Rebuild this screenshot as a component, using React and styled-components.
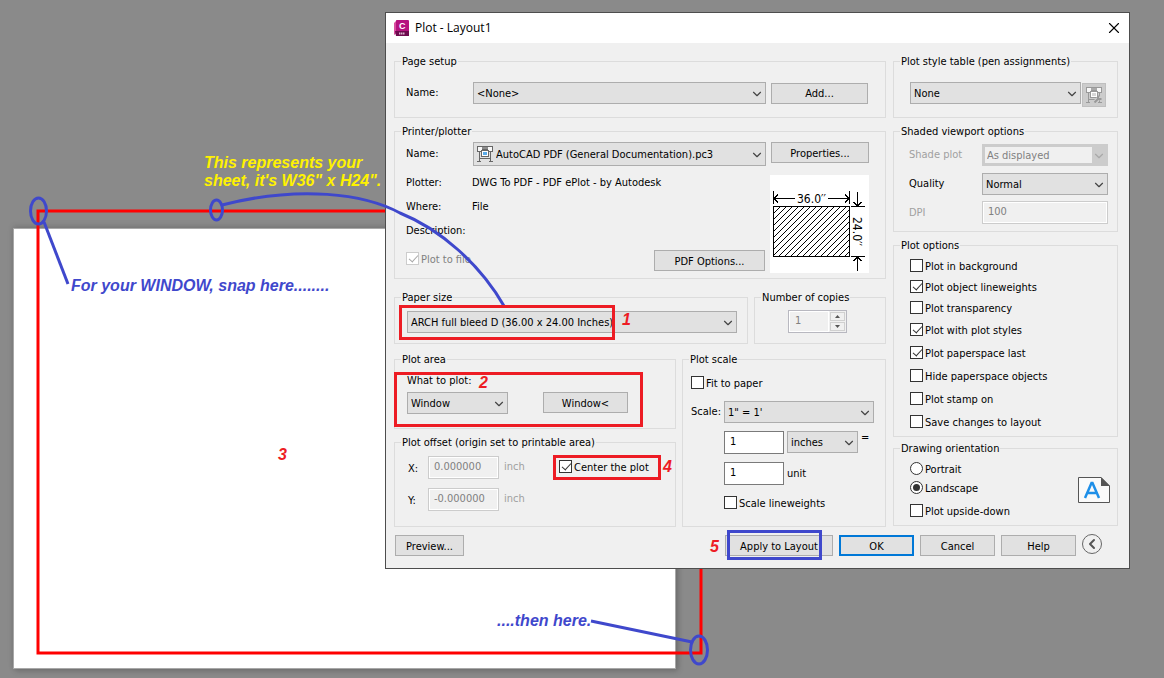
import React from "react";
import styled, { createGlobalStyle } from "styled-components";
import { ChevronDown, ChevronLeft, X } from "lucide-react";

const GlobalStyle = createGlobalStyle`
    * {
        box-sizing: border-box;
    }
    body {
        margin: 0;
        background: #8a8a8a;
        font-family: "DejaVu Sans Condensed", "DejaVu Sans", sans-serif;
        font-size: 11px;
        line-height: 14px;
        color: #000;
    }
    input, select, button {
        font: inherit;
        color: inherit;
        margin: 0;
    }
`

const Desktop = styled.main`
    position: relative;
    min-height: 100vh;
    overflow: hidden;
`
const Sheet = styled.div`
    position: absolute;
    left: 13px;
    top: 228px;
    width: 663px;
    height: 441px;
    background: #fff;
    border: 1px solid #a8a8a8;
    box-shadow: 2px 2px 6px rgba(0, 0, 0, 0.2), 0 -2px 6px rgba(0, 0, 0, 0.1);
`
const Overlay = styled.svg`
    position: absolute;
    left: 0;
    top: 0;
    pointer-events: none;
`
const Note = styled.div`
    position: absolute;
    left: ${p => p.$x}px;
    top: ${p => p.$y}px;
    color: ${p => p.$color};
    font: italic bold 16px/18px "Liberation Sans", Arial, sans-serif;
    white-space: nowrap;
`
const Mark = styled.div`
    position: absolute;
    left: ${p => p.$x}px;
    top: ${p => p.$y}px;
    width: ${p => p.$w}px;
    height: ${p => p.$h}px;
    border: 3px solid ${p => p.$color};
    pointer-events: none;
`

const Dialog = styled.section`
    position: absolute;
    left: 385px;
    top: 12px;
    width: 745px;
    background: #f0f0f0;
    border: 1px solid #4d4d4d;
`
const TitleBar = styled.header`
    display: flex;
    align-items: center;
    gap: 5px;
    height: 30px;
    padding: 0 6px 0 8px;
    background: #fff;
`
const Title = styled.h1`
    flex: 1;
    margin: 0;
    font: 12px/16px "Open Sans", sans-serif;
`
const CloseButton = styled.button`
    display: flex;
    padding: 0;
    border: 0;
    background: none;
`
const Columns = styled.div`
    display: flex;
    gap: 7px;
    padding: 11px 11px 0 8px;
`
const Main = styled.div`
    flex: 1;
    display: flex;
    flex-direction: column;
    gap: 6px;
`
const Side = styled.div`
    flex: none;
    width: 225px;
    display: flex;
    flex-direction: column;
    gap: 6px;
`
const Split = styled.div`
    display: flex;
    gap: 6px;
    padding-top: ${p => p.$top || 0}px;
`
const Stack = styled.div`
    flex: 1;
    display: flex;
    flex-direction: column;
    gap: ${p => p.$gap}px;
`

const Group = styled.fieldset`
    flex: ${p => (p.$w ? `none` : p.$grow ? `1` : `initial`)};
    width: ${p => (p.$w ? `${p.$w}px` : `auto`)};
    min-width: 0;
    margin: 0;
    padding: ${p => p.$pad};
    border: 1px solid #dcdcdc;
`
const Legend = styled.legend`
    margin-left: ${p => p.$shift || 0}px;
    padding: 0 1px;
    height: 14px;
    line-height: 16px;
    white-space: nowrap;
`
const Row = styled.div`
    display: flex;
    align-items: ${p => p.$align || "center"};
    gap: ${p => p.$gap || 0}px;
    margin-top: ${p => p.$top || 0}px;
`
const Caption = styled.label`
    flex: none;
    width: ${p => (p.$w ? `${p.$w}px` : "auto")};
    color: ${p => (p.$dim ? "#a0a0a0" : "inherit")};
    white-space: nowrap;
`
const Value = styled.span`
    white-space: nowrap;
`
const Button = styled.button`
    flex: none;
    width: ${p => p.$w}px;
    height: 21px;
    padding: 2px 0 0;
    background: #e1e1e1;
    border: ${p => (p.$primary ? "2px solid #0078d7" : "1px solid #adadad")};
    white-space: nowrap;
`

const SelectBox = styled.div`
    position: relative;
    flex: ${p => (p.$w ? "none" : "1")};
    width: ${p => (p.$w ? `${p.$w}px` : "auto")};
    color: ${p => (p.$dim ? "#808080" : "inherit")};

    > svg {
        position: absolute;
        top: 50%;
        margin-top: -6px;
        pointer-events: none;
    }
    > svg.arrow {
        right: 2px;
        color: ${p => (p.$dim ? "#a8a8a8" : "#444")};
    }
    > svg.icon {
        left: 4px;
        margin-top: -8px;
    }
    select {
        appearance: none;
        display: block;
        width: 100%;
        height: ${p => p.$h || 22}px;
        padding: 2px 16px 0 ${p => p.$indent || 3}px;
        background: ${p => (p.$dim ? "#f0f0f0" : "#e1e1e1")};
        border: 1px solid #adadad;
        border-radius: 0;
        opacity: 1;
        ${p => p.$dim && `
            border: 3px solid #cccccc;
            border-right-width: 16px;
            padding: 1px 0 0 2px;
        `}
    }
`
const TextBox = styled.input`
    flex: ${p => (p.$w ? "none" : "1")};
    width: ${p => (p.$w ? `${p.$w}px` : "auto")};
    min-width: 0;
    height: 23px;
    padding: 0 5px 2px;
    background: #fff;
    border: 1px solid #7a7a7a;

    &:disabled {
        color: #808080;
        background: #f0f0f0;
        border-color: #cccccc;
        box-shadow: inset 0 0 0 1px #fff;
    }
`
const CheckLabel = styled.label`
    display: flex;
    align-items: center;
    gap: 2px;
    color: ${p => (p.$dim ? "#808080" : "inherit")};
    white-space: nowrap;
    height: 13px;
`
const CheckText = styled.span`
    padding-top: 2px;
`
const Tick = styled.input`
    appearance: none;
    position: relative;
    flex: none;
    width: 13px;
    height: 13px;
    background: #fff;
    border: 1px solid #333;
    border-radius: ${p => (p.type === "radio" ? "50%" : "0")};

    &:disabled {
        border-color: #cccccc;
    }
    &[type="checkbox"]:checked::after {
        content: "";
        position: absolute;
        left: 4px;
        top: 0;
        width: 4px;
        height: 8px;
        border: solid #333;
        border-width: 0 1px 1px 0;
        transform: rotate(42deg);
    }
    &[type="checkbox"]:disabled::after {
        border-color: #a8a8a8;
    }
    &[type="radio"]:checked::after {
        content: "";
        position: absolute;
        left: 2px;
        top: 2px;
        width: 7px;
        height: 7px;
        border-radius: 50%;
        background: #333;
    }
`
const Checks = styled.div`
    display: flex;
    flex-direction: column;
    gap: ${p => p.$gap}px;
    margin-top: ${p => p.$top || 0}px;
`
const Details = styled.div`
    flex: 1;
    margin-top: 5px;
`
const Fact = styled.div`
    display: flex;
    align-items: center;
    height: 24px;
`
const Preview = styled.svg`
    flex: none;
    margin-top: 9px;
    background: #fff;
`
const Spinner = styled.div`
    display: flex;
    width: 59px;
    height: 23px;
    background: #f0f0f0;
    border: 1px solid #b8b8c0;

    input {
        flex: 1;
        min-width: 0;
        padding: 0 5px 2px;
        border: 1px solid #fff;
        background: none;
        color: #808080;
    }
`
const Steps = styled.div`
    display: flex;
    flex-direction: column;
    gap: 1px;
    width: 17px;
    padding: 1px;
`
const Step = styled.button`
    flex: 1;
    display: flex;
    align-items: center;
    justify-content: center;
    padding: 0;
    background: #f0f0f0;
    border: 1px solid #d0d0d0;
`
const EditStyle = styled.button`
    display: flex;
    align-items: center;
    justify-content: center;
    width: 24px;
    height: 24px;
    margin-top: 1px;
    padding: 0;
    background: #cccccc;
    border: 1px solid #bfbfbf;
`
const Orientation = styled.div`
    display: flex;
    align-items: center;
    justify-content: space-between;
`
const Footer = styled.footer`
    display: flex;
    align-items: flex-start;
    gap: 6px;
    padding: 8px 27px 12px 9px;
`
const Spacer = styled.div`
    flex: 1;
`
const RoundButton = styled.button`
    display: flex;
    align-items: center;
    justify-content: center;
    width: 20px;
    height: 20px;
    margin-top: -1px;
    padding: 0;
    color: #555;
    background: none;
    border: 1px solid #666;
    border-radius: 50%;
`

const RED = "#ed1c24"
const BLUE = "#3f48cc"

function Select({ id, value, icon, disabled, ...box }) {
    return <SelectBox $dim={disabled} {...box}>
        <select id={id} aria-label={id === "units" ? "Units" : undefined} disabled={disabled}>
            <option>{value}</option>
        </select>
        {icon}
        <ChevronDown className="arrow" size={14} strokeWidth={2} />
    </SelectBox>
}

function Check({ label, type = "checkbox", checked, disabled, name }) {
    return <CheckLabel $dim={disabled}>
        <Tick type={type} name={name} defaultChecked={checked} disabled={disabled} />
        <CheckText>{label}</CheckText>
    </CheckLabel>
}

function PlotterIcon({ gray, ...rest }) {
    const dark = gray ? "#999" : "#666"
    return <svg width="16" height="16" viewBox="0 0 16 16" shapeRendering="crispEdges" {...rest}>
        <rect x="0" y="0" width="16" height="6" fill={dark} />
        <rect x="1" y="1" width="4" height="4" fill="#f8f8f8" />
        <rect x="11" y="1" width="4" height="4" fill="#f8f8f8" />
        <rect x="5" y="1" width="6" height="2" fill={gray ? "#aaa" : "#8c8c8c"} />
        <path d="M2.500 6v10M13.500 6v10M0 15.500h4M12 15.500h4M3 12.500h10" stroke={dark} fill="none" />
        <rect x="4" y="4" width="8" height="7" fill={dark} />
        <rect x="5" y="5" width="6" height="5" fill="#fff" />
        <rect x="6" y="6" width="4" height="3" fill={gray ? "#d8d8d8" : "#5aaae8"} />
        {gray && <g fill="none" shapeRendering="auto">
            <path d="M8 16l6-6" stroke="#ccc" strokeWidth="4" />
            <path d="M8.500 15.500L13 11M12 8.500v3.500h3.500" stroke="#999" strokeWidth="2" />
        </g>}
    </svg>
}

function AppIcon() {
    return <svg width="16" height="17" viewBox="0 0 16 17">
        <path d="M0 3l3-3v13l-3 2z" fill="#d94fa0" />
        <rect x="2" y="0" width="13" height="12" rx="1" fill="#b5127f" />
        <path d="M1 11h14v5H2z" fill="#6e0a4e" />
        <text x="5" y="9" fontFamily="Liberation Sans" fontWeight="bold" fontSize="9" fill="#fff">C</text>
        <path d="M5 13.500h6" stroke="#d9b3cd" strokeWidth="2" strokeDasharray="1.500 .5" />
    </svg>
}

function PaperPreview() {
    return <Preview width="99" height="98" viewBox="0 0 99 98" shapeRendering="crispEdges">
        <defs>
            <pattern id="hatch" width="6" height="6" patternUnits="userSpaceOnUse">
                <path d="M-1 7L7 -1M-1 1L1 -1M5 7L7 5" stroke="#000" />
            </pattern>
        </defs>
        <rect x="3.500" y="31.500" width="76" height="50" fill="url(#hatch)" stroke="#000" />
        <path d="M3.500 16v13M79.500 16v13M4 23.500h21M58 23.500h21M4 23.500l4-4M4 23.500l4 4M79 23.500l-4-4M79 23.500l-4 4" stroke="#000" fill="none" />
        <path d="M81 31.500h14M81 81.500h14M87.500 17v14M83.500 27l4 4 4-4M87.500 96V82M83.500 86l4-4 4 4" stroke="#000" fill="none" />
        <text x="27" y="28" fontFamily="DejaVu Sans Condensed" fontSize="12">36.0′′</text>
        <text transform="translate(83 42) rotate(90)" fontFamily="DejaVu Sans Condensed" fontSize="12">24.0′′</text>
    </Preview>
}

export default function App() {
    return <Desktop>
        <GlobalStyle />
        <Sheet />
        <Overlay width="1164" height="678">
            <rect x="38" y="211" width="663" height="442" fill="none" stroke="#f00" strokeWidth="3" />
        </Overlay>

        <Dialog>
            <TitleBar>
                <AppIcon />
                <Title>Plot - Layout1</Title>
                <CloseButton aria-label="Close"><X size={18} strokeWidth={1.5} /></CloseButton>
            </TitleBar>

            <Columns>
                <Main>
                    <Group $pad="14px 17px 13px 11px">
                        <Legend $shift={-5}>Page setup</Legend>
                        <Row $gap={5}>
                            <Caption htmlFor="setup" $w={62}>Name:</Caption>
                            <Select id="setup" value="<None>" />
                            <Button $w={97}>Add...</Button>
                        </Row>
                    </Group>

                    <Group $pad="4px 16px 5px 11px">
                        <Legend $shift={-5}>Printer/plotter</Legend>
                        <Row $gap={5} $align="flex-start">
                            <Caption htmlFor="printer" $w={62}><Fact as="span">Name:</Fact></Caption>
                            <Select id="printer" value="AutoCAD PDF (General Documentation).pc3" $h={24} $indent={22}
                                icon={<PlotterIcon className="icon" />} />
                            <Button $w={98}>Properties...</Button>
                        </Row>
                        <Row $align="flex-start" $gap={5}>
                            <Details>
                                <Fact><Caption as="span" $w={66}>Plotter:</Caption><Value>DWG To PDF - PDF ePlot - by Autodesk</Value></Fact>
                                <Fact><Caption as="span" $w={66}>Where:</Caption><Value>File</Value></Fact>
                                <Fact><Caption as="span" $w={66}>Description:</Caption></Fact>
                                <Row $top={7} $align="flex-start">
                                    <Row $top={2}><Check label="Plot to file" checked disabled /></Row>
                                    <Spacer />
                                    <Button $w={111}>PDF Options...</Button>
                                </Row>
                            </Details>
                            <PaperPreview />
                        </Row>
                    </Group>

                    <Split $top={5}>
                        <Group $grow $pad="7px 10px 10px 12px">
                            <Legend $shift={-6}>Paper size</Legend>
                            <Select id="paper" value="ARCH full bleed D (36.00 x 24.00 Inches)" />
                        </Group>
                        <Group $w={132} $pad="6px 0 10px 33px">
                            <Legend $shift={-27}>Number of copies</Legend>
                            <Spinner>
                                <input aria-label="Number of copies" defaultValue="1" disabled />
                                <Steps>
                                    <Step aria-label="More"><svg width="5" height="3"><path d="M0 3L2.500 0L5 3z" fill="#555" /></svg></Step>
                                    <Step aria-label="Fewer"><svg width="5" height="3"><path d="M0 0h5L2.500 3z" fill="#555" /></svg></Step>
                                </Steps>
                            </Spinner>
                        </Group>
                    </Split>

                    <Split $top={2}>
                        <Stack $gap={6}>
                            <Group $pad="8px 47px 14px 12px">
                                <Legend $shift={-6}>Plot area</Legend>
                                <Caption htmlFor="what">What to plot:</Caption>
                                <Row $top={4} $align="flex-start">
                                    <Select id="what" value="Window" $w={101} />
                                    <Spacer />
                                    <Button $w={85}>Window&lt;</Button>
                                </Row>
                            </Group>
                            <Group $pad="7px 12px 15px 13px">
                                <Legend $shift={-7}>Plot offset (origin set to printable area)</Legend>
                                <Row $gap={5} $align="flex-start">
                                    <Row $top={6}><Caption htmlFor="x" $w={15}>X:</Caption></Row>
                                    <TextBox id="x" $w={71} defaultValue="0.000000" disabled />
                                    <Row $top={4}><Caption as="span" $w={50} $dim>inch</Caption></Row>
                                    <Row $top={4}><Check label="Center the plot" checked /></Row>
                                </Row>
                                <Row $gap={5} $top={9} $align="flex-start">
                                    <Row $top={6}><Caption htmlFor="y" $w={15}>Y:</Caption></Row>
                                    <TextBox id="y" $w={71} defaultValue="-0.000000" disabled />
                                    <Row $top={4}><Caption as="span" $dim>inch</Caption></Row>
                                </Row>
                            </Group>
                        </Stack>

                        <Group $w={204} $pad="10px 11px 17px 8px">
                            <Legend $shift={-2}>Plot scale</Legend>
                            <Check label="Fit to paper" />
                            <Row $top={12}>
                                <Caption htmlFor="scale" $w={33}>Scale:</Caption>
                                <Select id="scale" value={`1" = 1'`} />
                            </Row>
                            <Row $top={8} $gap={3} $align="flex-start">
                                <Caption as="span" $w={30} />
                                <TextBox $w={60} aria-label="Paper units" defaultValue="1" />
                                <Select id="units" value="inches" $w={71} />
                                <span>=</span>
                            </Row>
                            <Row $top={8} $gap={3}>
                                <Caption as="span" $w={30} />
                                <TextBox id="unit" $w={60} defaultValue="1" />
                                <Caption htmlFor="unit">unit</Caption>
                            </Row>
                            <Row $top={11}>
                                <Caption as="span" $w={33} />
                                <Check label="Scale lineweights" />
                            </Row>
                        </Group>
                    </Split>
                </Main>

                <Side>
                    <Group $pad="14px 11px 10px 16px">
                        <Legend $shift={-10}>Plot style table (pen assignments)</Legend>
                        <Row $align="flex-start" $gap={1}>
                            <Select id="style" value="None" />
                            <EditStyle aria-label="Edit plot style" disabled><PlotterIcon gray /></EditStyle>
                        </Row>
                    </Group>

                    <Group $pad="6px 9px 7px 15px">
                        <Legend $shift={-9}>Shaded viewport options</Legend>
                        <Row>
                            <Caption htmlFor="shade" $w={73} $dim>Shade plot</Caption>
                            <Select id="shade" value="As displayed" disabled />
                        </Row>
                        <Row $top={7}>
                            <Caption htmlFor="quality" $w={73}>Quality</Caption>
                            <Select id="quality" value="Normal" />
                        </Row>
                        <Row $top={6}>
                            <Caption htmlFor="dpi" $w={73} $dim>DPI</Caption>
                            <TextBox id="dpi" defaultValue="100" disabled />
                        </Row>
                    </Group>

                    <Stack $gap={4}>
                        <Group $pad="7px 8px 8px 16px">
                            <Legend $shift={-10}>Plot options</Legend>
                            <Checks $gap={8}>
                                <Check label="Plot in background" />
                                <Check label="Plot object lineweights" checked />
                                <Check label="Plot transparency" />
                            </Checks>
                            <Checks $gap={10} $top={9}>
                                <Check label="Plot with plot styles" checked />
                                <Check label="Plot paperspace last" checked />
                                <Check label="Hide paperspace objects" />
                                <Check label="Plot stamp on" />
                                <Check label="Save changes to layout" />
                            </Checks>
                        </Group>

                        <Group $pad="7px 7px 8px 16px">
                            <Legend $shift={-10}>Drawing orientation</Legend>
                            <Orientation>
                                <div>
                                    <Checks $gap={6}>
                                        <Check type="radio" name="orientation" label="Portrait" />
                                        <Check type="radio" name="orientation" label="Landscape" checked />
                                    </Checks>
                                    <Checks $top={10}>
                                        <Check label="Plot upside-down" />
                                    </Checks>
                                </div>
                                <svg width="32" height="26" viewBox="0 0 32 26">
                                    <path d="M.5.500H23L31.500 9v16.500H.5z" fill="#fafafa" stroke="#555" />
                                    <path d="M23 0v9h9z" fill="#555" />
                                    <path d="M7 21L13.500 6h1L21 21M9.500 16h9" fill="none" stroke="#1e8fe8" strokeWidth="2.500" />
                                </svg>
                            </Orientation>
                        </Group>
                    </Stack>
                </Side>
            </Columns>

            <Footer>
                <Button $w={69}>Preview...</Button>
                <Spacer />
                <Button $w={108}>Apply to Layout</Button>
                <Button $w={75} $primary>OK</Button>
                <Button $w={75}>Cancel</Button>
                <Button $w={75}>Help</Button>
                <RoundButton aria-label="Less options"><ChevronLeft size={16} strokeWidth={3} /></RoundButton>
            </Footer>
        </Dialog>

        <Overlay width="1164" height="678" fill="none" stroke={BLUE} strokeWidth="3">
            <ellipse cx="38.500" cy="211" rx="8" ry="13" />
            <path d="M44 222L68 284" />
            <ellipse cx="216.500" cy="210" rx="6" ry="10" />
            <path d="M222 205C300 185 365 194 400 213C440 229 480 264 504 306" />
            <ellipse cx="699" cy="650" rx="8.500" ry="14" />
            <path d="M591 621L692 642" />
        </Overlay>
        <Mark $x={399} $y={305} $w={216} $h={35} $color={RED} />
        <Mark $x={394} $y={372} $w={249} $h={55} $color={RED} />
        <Mark $x={553} $y={455} $w={108} $h={25} $color={RED} />
        <Mark $x={727} $y={530} $w={95} $h={30} $color={BLUE} />
        <Note $x={204} $y={154} $color="#fff200">This represents your<br />sheet, it's W36" x H24".</Note>
        <Note $x={71} $y={277} $color={BLUE}>For your WINDOW, snap here........</Note>
        <Note $x={497} $y={612} $color={BLUE}>....then here.</Note>
        <Note $x={622} $y={311} $color={RED}>1</Note>
        <Note $x={479} $y={374} $color={RED}>2</Note>
        <Note $x={278} $y={446} $color={RED}>3</Note>
        <Note $x={663} $y={458} $color={RED}>4</Note>
        <Note $x={710} $y={538} $color={RED}>5</Note>
    </Desktop>
}
